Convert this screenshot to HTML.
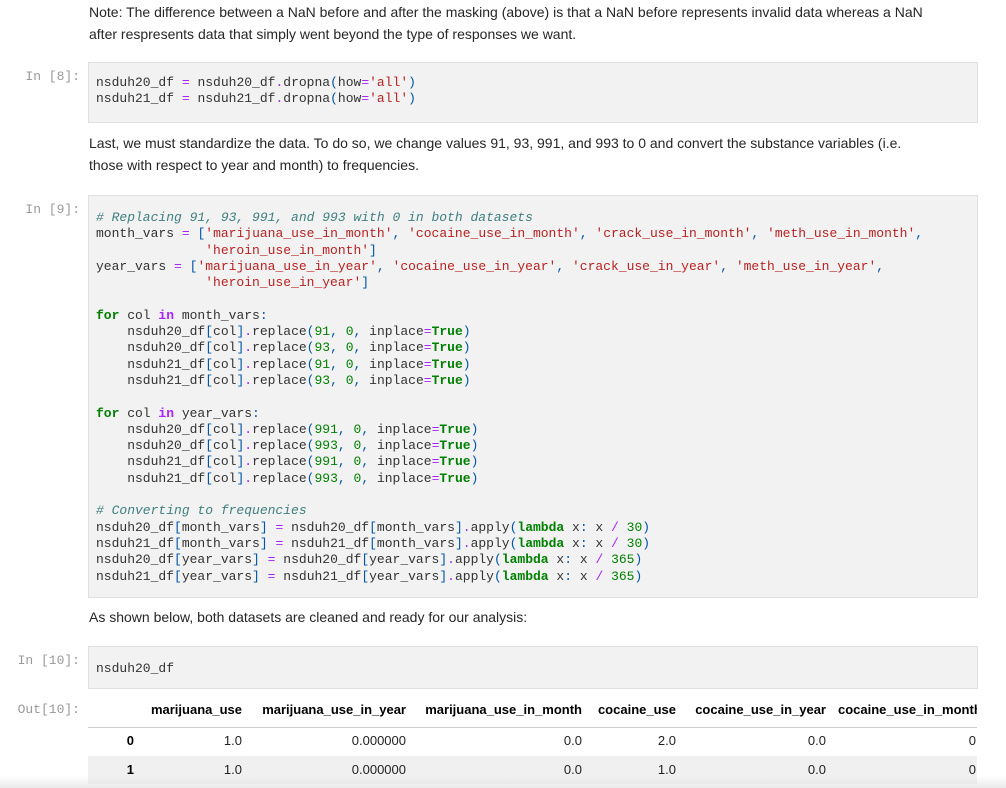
<!DOCTYPE html>
<html><head><meta charset="utf-8"><style>
body{margin:0;width:1006px;height:788px;background:#fff;overflow:hidden;position:relative;font-family:"Liberation Sans",sans-serif;color:#222}
.p{position:absolute;left:89px;font-size:14px;line-height:22px;color:#262626;width:845px}
.pr{position:absolute;font-family:"Liberation Mono",monospace;font-size:13px;color:#999;text-align:right;width:80px;left:0}
.box{position:absolute;left:88px;width:888px;background:#f2f2f2;border:1px solid #e0e0e0}
pre{margin:0;position:absolute;left:7px;font-family:"Liberation Mono",monospace;font-size:13px;line-height:16.3px;color:#333}
.c{color:#408080;font-style:italic}.s{color:#ba2121}.k{color:#008000;font-weight:bold}.o{color:#aa22ff}.i{color:#aa22ff;font-weight:bold}.n{color:#008000}.b{color:#0055aa}
.t{position:absolute;font-size:13px;text-align:right}
.h{font-weight:bold;color:#000}
</style></head><body>
<div class="p" style="top:1px">Note: The difference between a NaN before and after the masking (above) is that a NaN before represents invalid data whereas a NaN after respresents data that simply went beyond the type of responses we want.</div>
<div class="pr" style="top:69px">In [8]:</div>
<div class="box" style="top:62px;height:59px"><pre style="top:12px">nsduh20_df <span class="o">=</span> nsduh20_df<span class="o">.</span>dropna<span class="b">(</span>how<span class="o">=</span><span class="s">'all'</span><span class="b">)</span>
nsduh21_df <span class="o">=</span> nsduh21_df<span class="o">.</span>dropna<span class="b">(</span>how<span class="o">=</span><span class="s">'all'</span><span class="b">)</span></pre></div>
<div class="p" style="top:132px">Last, we must standardize the data. To do so, we change values 91, 93, 991, and 993 to 0 and convert the substance variables (i.e. those with respect to year and month) to frequencies.</div>
<div class="pr" style="top:202px">In [9]:</div>
<div class="box" style="top:195px;height:401px"><pre style="top:14px"><span class="c"># Replacing 91, 93, 991, and 993 with 0 in both datasets</span>
month_vars <span class="o">=</span> <span class="b">[</span><span class="s">'marijuana_use_in_month'</span><span class="b">,</span> <span class="s">'cocaine_use_in_month'</span><span class="b">,</span> <span class="s">'crack_use_in_month'</span><span class="b">,</span> <span class="s">'meth_use_in_month'</span><span class="b">,</span>
              <span class="s">'heroin_use_in_month'</span><span class="b">]</span>
year_vars <span class="o">=</span> <span class="b">[</span><span class="s">'marijuana_use_in_year'</span><span class="b">,</span> <span class="s">'cocaine_use_in_year'</span><span class="b">,</span> <span class="s">'crack_use_in_year'</span><span class="b">,</span> <span class="s">'meth_use_in_year'</span><span class="b">,</span>
              <span class="s">'heroin_use_in_year'</span><span class="b">]</span>

<span class="k">for</span> col <span class="i">in</span> month_vars<span class="b">:</span>
    nsduh20_df<span class="b">[</span>col<span class="b">]</span><span class="o">.</span>replace<span class="b">(</span><span class="n">91</span><span class="b">,</span> <span class="n">0</span><span class="b">,</span> inplace<span class="o">=</span><span class="k">True</span><span class="b">)</span>
    nsduh20_df<span class="b">[</span>col<span class="b">]</span><span class="o">.</span>replace<span class="b">(</span><span class="n">93</span><span class="b">,</span> <span class="n">0</span><span class="b">,</span> inplace<span class="o">=</span><span class="k">True</span><span class="b">)</span>
    nsduh21_df<span class="b">[</span>col<span class="b">]</span><span class="o">.</span>replace<span class="b">(</span><span class="n">91</span><span class="b">,</span> <span class="n">0</span><span class="b">,</span> inplace<span class="o">=</span><span class="k">True</span><span class="b">)</span>
    nsduh21_df<span class="b">[</span>col<span class="b">]</span><span class="o">.</span>replace<span class="b">(</span><span class="n">93</span><span class="b">,</span> <span class="n">0</span><span class="b">,</span> inplace<span class="o">=</span><span class="k">True</span><span class="b">)</span>

<span class="k">for</span> col <span class="i">in</span> year_vars<span class="b">:</span>
    nsduh20_df<span class="b">[</span>col<span class="b">]</span><span class="o">.</span>replace<span class="b">(</span><span class="n">991</span><span class="b">,</span> <span class="n">0</span><span class="b">,</span> inplace<span class="o">=</span><span class="k">True</span><span class="b">)</span>
    nsduh20_df<span class="b">[</span>col<span class="b">]</span><span class="o">.</span>replace<span class="b">(</span><span class="n">993</span><span class="b">,</span> <span class="n">0</span><span class="b">,</span> inplace<span class="o">=</span><span class="k">True</span><span class="b">)</span>
    nsduh21_df<span class="b">[</span>col<span class="b">]</span><span class="o">.</span>replace<span class="b">(</span><span class="n">991</span><span class="b">,</span> <span class="n">0</span><span class="b">,</span> inplace<span class="o">=</span><span class="k">True</span><span class="b">)</span>
    nsduh21_df<span class="b">[</span>col<span class="b">]</span><span class="o">.</span>replace<span class="b">(</span><span class="n">993</span><span class="b">,</span> <span class="n">0</span><span class="b">,</span> inplace<span class="o">=</span><span class="k">True</span><span class="b">)</span>

<span class="c"># Converting to frequencies</span>
nsduh20_df<span class="b">[</span>month_vars<span class="b">]</span> <span class="o">=</span> nsduh20_df<span class="b">[</span>month_vars<span class="b">]</span><span class="o">.</span>apply<span class="b">(</span><span class="k">lambda</span> x<span class="b">:</span> x <span class="o">/</span> <span class="n">30</span><span class="b">)</span>
nsduh21_df<span class="b">[</span>month_vars<span class="b">]</span> <span class="o">=</span> nsduh21_df<span class="b">[</span>month_vars<span class="b">]</span><span class="o">.</span>apply<span class="b">(</span><span class="k">lambda</span> x<span class="b">:</span> x <span class="o">/</span> <span class="n">30</span><span class="b">)</span>
nsduh20_df<span class="b">[</span>year_vars<span class="b">]</span> <span class="o">=</span> nsduh20_df<span class="b">[</span>year_vars<span class="b">]</span><span class="o">.</span>apply<span class="b">(</span><span class="k">lambda</span> x<span class="b">:</span> x <span class="o">/</span> <span class="n">365</span><span class="b">)</span>
nsduh21_df<span class="b">[</span>year_vars<span class="b">]</span> <span class="o">=</span> nsduh21_df<span class="b">[</span>year_vars<span class="b">]</span><span class="o">.</span>apply<span class="b">(</span><span class="k">lambda</span> x<span class="b">:</span> x <span class="o">/</span> <span class="n">365</span><span class="b">)</span></pre></div>
<div class="p" style="top:606px">As shown below, both datasets are cleaned and ready for our analysis:</div>
<div class="pr" style="top:653px">In [10]:</div>
<div class="box" style="top:646px;height:41px"><pre style="top:14px">nsduh20_df</pre></div>
<div class="pr" style="top:702px">Out[10]:</div>
<div style="position:absolute;left:88px;top:727px;width:889px;height:1px;background:#ccc"></div>
<div style="position:absolute;left:88px;top:756px;width:889px;height:28px;background:#f0f0f0"></div>
<div style="position:absolute;left:0;top:776px;width:1006px;height:12px;background:linear-gradient(rgba(255,255,255,0),rgba(225,225,225,.7))"></div>
<div class="t h" style="right:764px;top:702px">marijuana_use</div>
<div class="t h" style="right:600px;top:702px">marijuana_use_in_year</div>
<div class="t h" style="right:424px;top:702px">marijuana_use_in_month</div>
<div class="t h" style="right:330px;top:702px">cocaine_use</div>
<div class="t h" style="right:180px;top:702px">cocaine_use_in_year</div>
<div class="t h" style="left:838px;top:702px;text-align:left;white-space:nowrap">cocaine_use_in_month</div>
<div style="position:absolute;left:977px;top:700px;width:29px;height:20px;background:#fff"></div>
<div class="t h" style="left:120px;width:14px;top:733px">0</div>
<div class="t" style="right:764px;top:733px">1.0</div>
<div class="t" style="right:600px;top:733px">0.000000</div>
<div class="t" style="right:424px;top:733px">0.0</div>
<div class="t" style="right:330px;top:733px">2.0</div>
<div class="t" style="right:180px;top:733px">0.0</div>
<div class="t" style="right:30px;top:733px">0</div>
<div class="t h" style="left:120px;width:14px;top:762px">1</div>
<div class="t" style="right:764px;top:762px">1.0</div>
<div class="t" style="right:600px;top:762px">0.000000</div>
<div class="t" style="right:424px;top:762px">0.0</div>
<div class="t" style="right:330px;top:762px">1.0</div>
<div class="t" style="right:180px;top:762px">0.0</div>
<div class="t" style="right:30px;top:762px">0</div>
</body></html>
